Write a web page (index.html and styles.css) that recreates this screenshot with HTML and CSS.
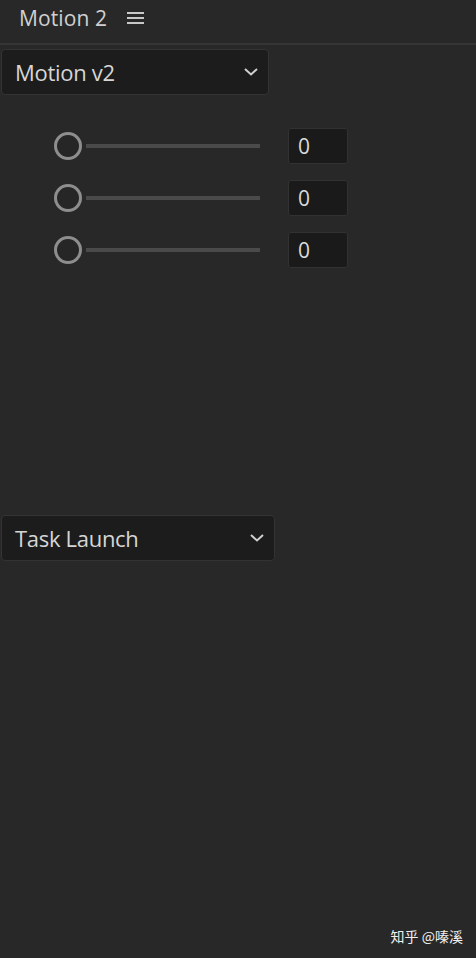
FILE: index.html
```html
<!DOCTYPE html>
<html>
<head>
<meta charset="utf-8">
<link rel="stylesheet" href="styles.css">
</head>
<body>
<div class="panel">
  <header class="header">
    <span class="title">Motion 2</span>
    <svg class="menu" width="17" height="14" viewBox="0 0 17 14"><rect x="0" y="1" width="17" height="2" fill="#c8c8c8"/><rect x="0" y="6" width="17" height="2" fill="#c8c8c8"/><rect x="0" y="11" width="17" height="2" fill="#c8c8c8"/></svg>
  </header>
  <div class="select select-motion">
    <span class="select-label">Motion v2</span>
    <svg class="chev" width="14" height="8" viewBox="0 0 14 8"><path d="M1 1 L7 6.5 L13 1" fill="none" stroke="#d0d0d0" stroke-width="2"/></svg>
  </div>
  <div class="sliders">
    <div class="row"><span class="thumb"></span><span class="track"></span><span class="num">0</span></div>
    <div class="row"><span class="thumb"></span><span class="track"></span><span class="num">0</span></div>
    <div class="row"><span class="thumb"></span><span class="track"></span><span class="num">0</span></div>
  </div>
  <div class="select select-task">
    <span class="select-label">Task Launch</span>
    <svg class="chev" width="14" height="8" viewBox="0 0 14 8"><path d="M1 1 L7 6.5 L13 1" fill="none" stroke="#d0d0d0" stroke-width="2"/></svg>
  </div>
</div>
<div class="watermark">知乎 @嗪溪</div>
</body>
</html>
```
FILE: styles.css
```css
html, body {
  margin: 0;
  padding: 0;
  background: #282828;
  height: 100%;
}
body {
  font-family: "Open Sans", "Noto Sans", "Noto Sans CJK SC", sans-serif;
  color: #d2d2d2;
  position: relative;
  overflow: hidden;
}
.header {
  height: 43px;
  display: flex;
  align-items: center;
  padding-left: 19px;
  border-bottom: 2px solid #353535;
  gap: 20px;
}
.title {
  font-size: 21px;
  color: #d0d0d0;
  letter-spacing: 0.1px;
  margin-top: -8px;
}
.menu {
  margin-top: -7px;
}
.select {
  margin-left: 1px;
  height: 44px;
  border: 1px solid #333;
  border-radius: 4px;
  background: #1c1c1c;
  display: flex;
  align-items: center;
  justify-content: space-between;
  padding: 0 10px 0 13px;
  box-sizing: content-box;
}
.select-motion {
  margin-top: 4px;
  width: 243px;
}
.select-task {
  margin-top: 247px;
  width: 249px;
}
.select-label {
  font-size: 22px;
  color: #d6d6d6;
  letter-spacing: -0.3px;
}
.sliders {
  margin-top: 33px;
  display: flex;
  flex-direction: column;
  gap: 16px;
  padding-left: 54px;
}
.row {
  display: flex;
  align-items: center;
  height: 36px;
}
.thumb {
  width: 22px;
  height: 22px;
  border: 3px solid #8e8e8e;
  border-radius: 50%;
  background: #262626;
  flex: none;
}
.track {
  width: 174px;
  height: 4px;
  background: #4a4a4a;
  margin-left: 4px;
}
.num {
  margin-left: 28px;
  width: 49px;
  height: 34px;
  background: #1a1a1a;
  border: 1px solid #313131;
  border-radius: 3px;
  padding-left: 9px;
  display: flex;
  align-items: center;
  font-size: 21px;
  color: #dadada;
}
.watermark {
  position: absolute;
  right: 13px;
  bottom: 12px;
  font-size: 14px;
  color: #f0f0f0;
  font-family: "Noto Sans CJK SC", sans-serif;
}
```
